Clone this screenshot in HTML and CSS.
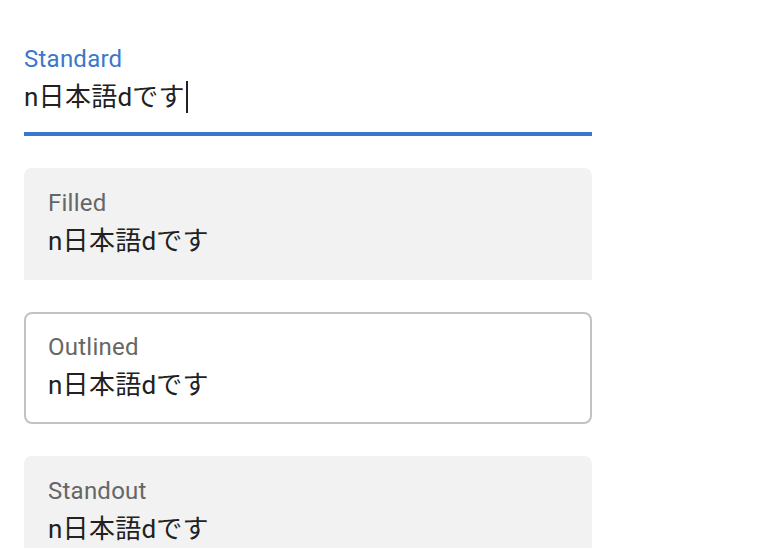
FILE: index.html
```html
<!DOCTYPE html>
<html lang="ja">
<head>
<meta charset="utf-8">
<title>Inputs</title>
<link rel="stylesheet" href="styles.css">
</head>
<body>
<main class="page">
  <div class="field field--standard">
    <div class="field__label field__label--focused">Standard</div>
    <div class="field__value">n日本語dです<span class="caret"></span></div>
  </div>
  <div class="field field--filled">
    <div class="field__label">Filled</div>
    <div class="field__value">n日本語dです</div>
  </div>
  <div class="field field--outlined">
    <div class="field__label">Outlined</div>
    <div class="field__value">n日本語dです</div>
  </div>
  <div class="field field--standout">
    <div class="field__label">Standout</div>
    <div class="field__value">n日本語dです</div>
  </div>
</main>
</body>
</html>
```

FILE: styles.css
```css
html, body {
  margin: 0;
  padding: 0;
  background: #ffffff;
}
body {
  font-family: Roboto, "Noto Sans CJK JP", sans-serif;
  overflow: hidden;
  height: 548px;
}
.page {
  display: flex;
  flex-direction: column;
  gap: 32px;
  padding: 24px;
  width: 568px;
}
.field {
  height: 112px;
  box-sizing: border-box;
  display: flex;
  flex-direction: column;
  flex-shrink: 0;
}
.field__label {
  font-size: 24px;
  line-height: 24px;
  margin-top: 23px;
  color: #666666;
  letter-spacing: 0.01em;
  white-space: nowrap;
}
.field__label--focused {
  color: #3b77cb;
}
.field__value {
  font-size: 26px;
  line-height: 32px;
  margin-top: 10px;
  color: #212121;
  letter-spacing: 0.01em;
  white-space: nowrap;
}
.caret {
  display: inline-block;
  width: 2px;
  height: 32px;
  vertical-align: top;
  background: #212121;
  margin-left: 1px;
}
.field--standard {
  border-bottom: 4px solid #3b77cb;
}
.field--filled,
.field--standout {
  background: #f2f2f2;
  border-radius: 8px 8px 0 0;
  padding: 0 24px;
}
.field--outlined {
  border: 2px solid #c2c2c2;
  border-radius: 8px;
  padding: 0 22px;
}
.field--outlined .field__label {
  margin-top: 21px;
}
```
